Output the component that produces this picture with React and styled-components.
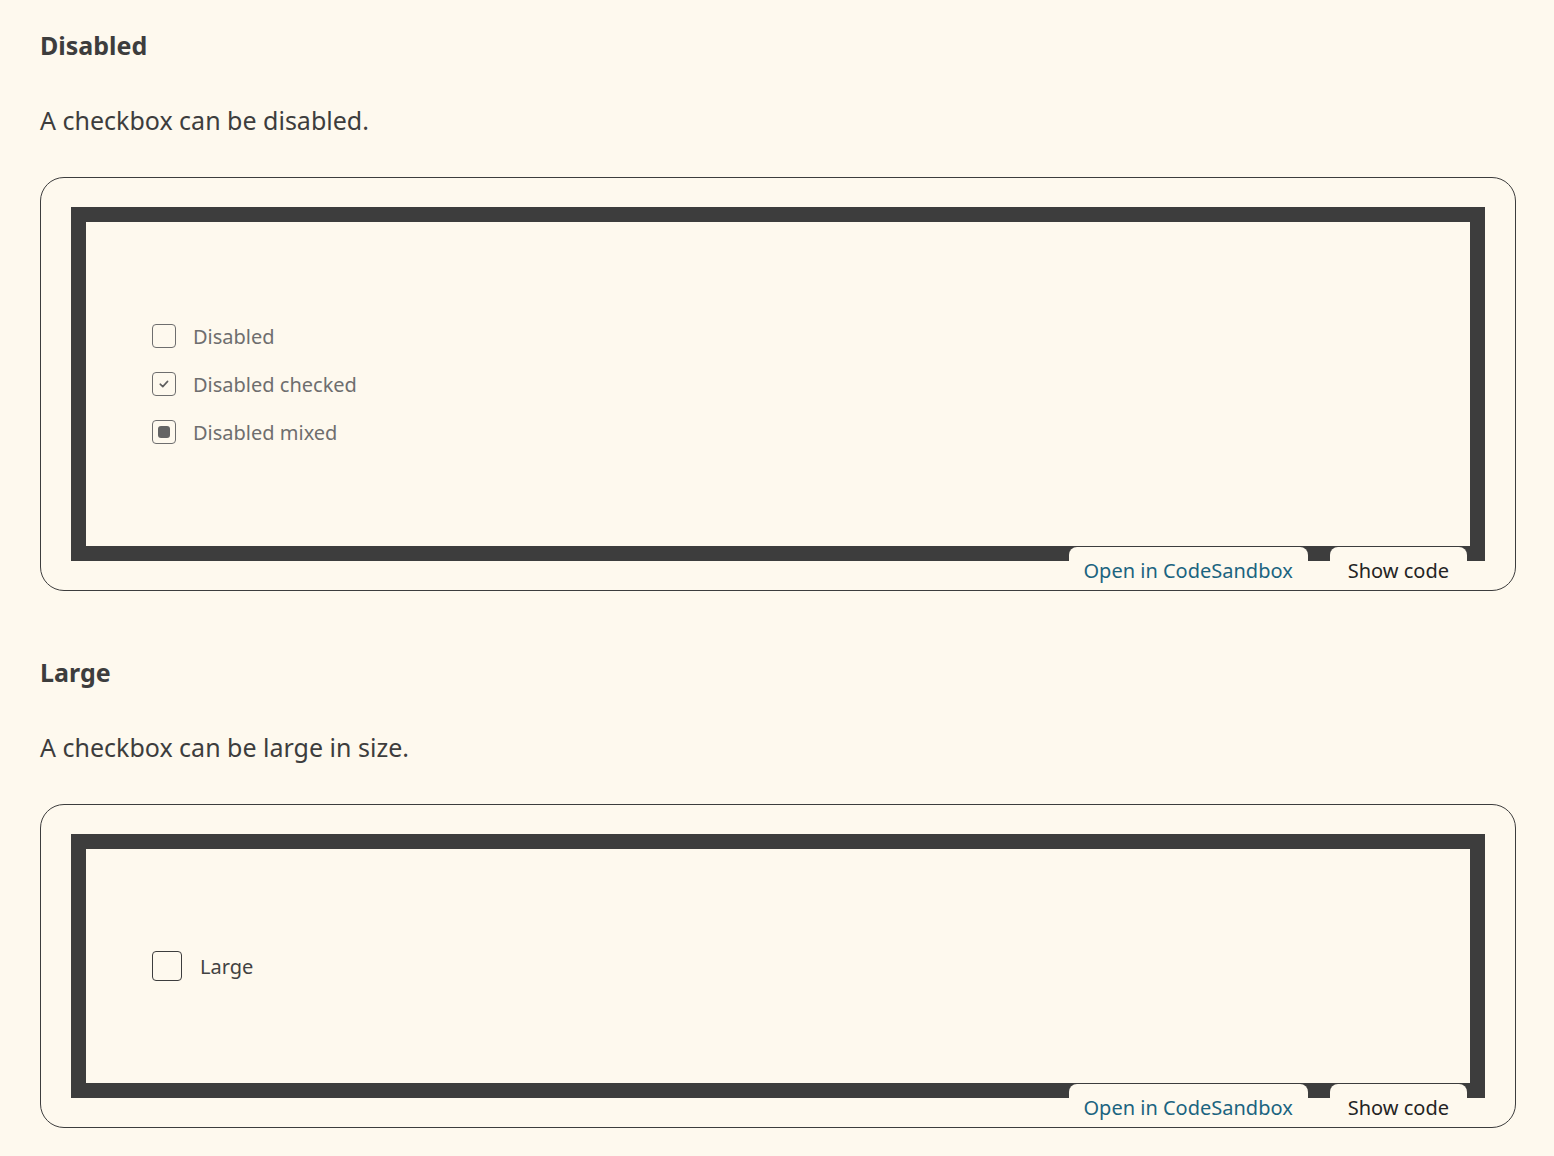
import React from 'react'
import styled, { createGlobalStyle } from 'styled-components'

const GlobalStyle = createGlobalStyle`
  body {
    margin: 0;
    background: #fef9ee;
    font-family: 'Noto Sans', 'Open Sans', sans-serif;
    color: #3d3d3d;
  }
`

const Page = styled.div`
  width: 1476px;
  margin-left: 40px;
  padding-bottom: 28px;
`

const Section = styled.section`
  padding-top: 29px;
  margin-bottom: 36px;
`

const Heading = styled.h3`
  margin: 0;
  font-size: 25px;
  line-height: 32px;
  font-weight: 700;
  color: #3d3d3d;
`

const Description = styled.p`
  margin: 43px 0 0;
  font-size: 25px;
  line-height: 32px;
  font-weight: 400;
  color: #3d3d3d;
`

const Card = styled.div`
  position: relative;
  margin-top: 41px;
  border: 1px solid #3d3d3d;
  border-radius: 24px;
  padding: 29px 30px;
`

const Frame = styled.div`
  border: 15px solid #3d3d3d;
  height: ${p => p.$height}px;
  display: flex;
  flex-direction: column;
  justify-content: center;
  padding-left: 66px;
  gap: 24px;
`

const Tabs = styled.div`
  position: absolute;
  right: 48px;
  bottom: 0;
  display: flex;
  gap: 22px;
`

const Tab = styled.button`
  height: 43px;
  padding: 4px ${p => p.$pad}px 0;
  background: #fef9ee;
  border: none;
  border-radius: 8px 8px 0 0;
  font-family: 'Noto Sans', 'Open Sans', sans-serif;
  font-size: 20px;
  color: ${p => (p.$link ? '#1b6480' : '#242424')};
  cursor: pointer;
`

const Row = styled.label`
  display: flex;
  align-items: center;
  height: 24px;
  gap: ${p => p.$gap}px;
  font-size: 20px;
  color: ${p => (p.$disabled ? '#6e6e6e' : '#424242')};
`

const Box = styled.span`
  box-sizing: border-box;
  width: ${p => p.$size}px;
  height: ${p => p.$size}px;
  border: 1px solid ${p => (p.$disabled ? '#6e6e6e' : '#3d3d3d')};
  border-radius: 4px;
  display: flex;
  align-items: center;
  justify-content: center;
  flex-shrink: 0;
`

const MixedMark = styled.span`
  width: 12px;
  height: 12px;
  border-radius: 3px;
  background: #646464;
`

const Checkbox = ({ label, state, disabled, size = 24, gap = 17 }) => (
  <Row $disabled={disabled} $gap={gap}>
    <Box $size={size} $disabled={disabled}>
      {state === 'checked' && (
        <svg width="14" height="14" viewBox="0 0 14 14" fill="none">
          <path d="M3.2 7.2 L5.8 9.6 L10.6 4.4" stroke="#5e5e5e" strokeWidth="1.6" strokeLinecap="round" strokeLinejoin="round" />
        </svg>
      )}
      {state === 'mixed' && <MixedMark />}
    </Box>
    {label}
  </Row>
)

const Example = ({ height, children }) => (
  <Card>
    <Frame $height={height}>{children}</Frame>
    <Tabs>
      <Tab $link $pad={15}>Open in CodeSandbox</Tab>
      <Tab $pad={18}>Show code</Tab>
    </Tabs>
  </Card>
)

export default function App() {
  return (
    <Page>
      <GlobalStyle />
      <Section>
        <Heading>Disabled</Heading>
        <Description>A checkbox can be disabled.</Description>
        <Example height={324}>
          <Checkbox label="Disabled" disabled />
          <Checkbox label="Disabled checked" state="checked" disabled />
          <Checkbox label="Disabled mixed" state="mixed" disabled />
        </Example>
      </Section>
      <Section>
        <Heading>Large</Heading>
        <Description>A checkbox can be large in size.</Description>
        <Example height={234}>
          <Checkbox label="Large" size={30} gap={18} />
        </Example>
      </Section>
    </Page>
  )
}
